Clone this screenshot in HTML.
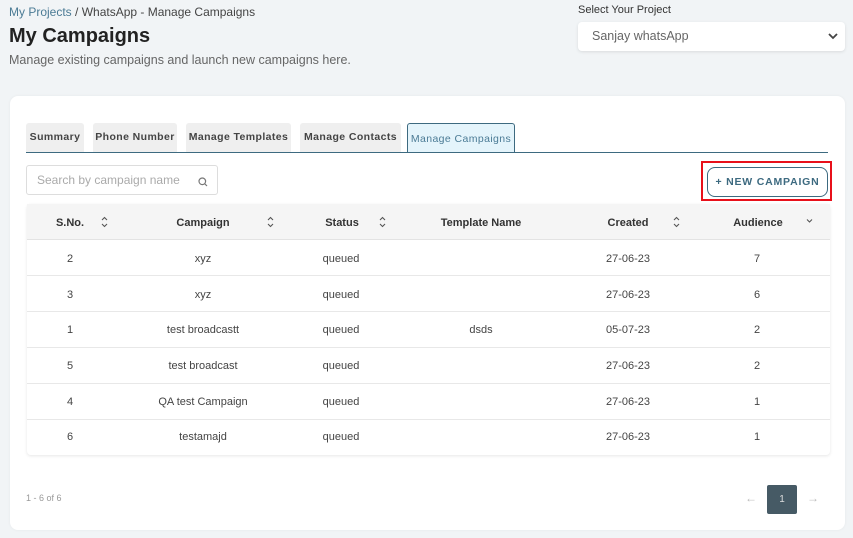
<!DOCTYPE html>
<html><head><style>
*{box-sizing:border-box;margin:0;padding:0}
body{width:853px;height:538px;background:#f1f4f6;font-family:"Liberation Sans",sans-serif;position:relative;overflow:hidden;color:#333}
.a{position:absolute}
.tab{position:absolute;top:123px;height:29px;background:#efefef;border-radius:3px 3px 0 0;font-size:10.5px;font-weight:bold;color:#444;text-align:center;line-height:29px;letter-spacing:.4px}
.th{position:absolute;top:205px;height:36px;line-height:36px;font-size:11px;font-weight:bold;color:#333;transform:translateX(-50%)}
.srt{position:absolute;top:216px}
.row{position:absolute;left:27px;width:803px;height:36px;border-bottom:1px solid #e8e8e8}
.c{position:absolute;font-size:11px;color:#444;line-height:36px;transform:translateX(-50%);white-space:nowrap}
</style></head><body>
<div class="a" style="left:9px;top:5px;font-size:12px;color:#444"><span style="color:#4b7b95">My Projects</span> / WhatsApp - Manage Campaigns</div>
<div class="a" style="left:9px;top:25px;font-size:20px;font-weight:bold;color:#222">My Campaigns</div>
<div class="a" style="left:9px;top:53px;font-size:12.5px;color:#666">Manage existing campaigns and launch new campaigns here.</div>
<div class="a" style="left:578px;top:4px;font-size:11px;color:#333">Select Your Project</div>
<div class="a" style="left:578px;top:22px;width:267px;height:29px;background:#fff;border-radius:4px;box-shadow:0 1px 3px rgba(0,0,0,.1);font-size:12.5px;color:#666;line-height:29px;padding-left:14px">Sanjay whatsApp
<svg class="a" style="right:6px;top:10px" width="12" height="8" viewBox="0 0 12 8"><path d="M2 2l4 4 4-4" stroke="#444" stroke-width="1.8" fill="none"/></svg></div>
<div class="a" style="left:10px;top:96px;width:835px;height:434px;background:#fff;border-radius:8px;box-shadow:0 0 3px rgba(0,0,0,.05)"></div>
<div class="tab" style="left:26px;width:58px">Summary</div>
<div class="tab" style="left:93px;width:84px">Phone Number</div>
<div class="tab" style="left:186px;width:105px">Manage Templates</div>
<div class="tab" style="left:300px;width:101px">Manage Contacts</div>
<div class="tab" style="left:407px;width:108px;background:#e4f4fb;border:1px solid #3d6a80;border-bottom:none;color:#4b7b95;font-weight:normal;line-height:30px">Manage Campaigns</div>
<div class="a" style="left:26px;top:152px;width:802px;height:1px;background:#3d6a80"></div>
<div class="a" style="left:26px;top:165px;width:192px;height:30px;border:1px solid #ddd;border-radius:3px;font-size:12px;color:#aaa;line-height:28px;padding-left:10px">Search by campaign name
<svg class="a" style="left:171px;top:11px" width="10" height="10" viewBox="0 0 10 10"><circle cx="4.3" cy="4.3" r="3.3" stroke="#777" stroke-width="1.2" fill="none"/><path d="M6.8 6.8L9 9" stroke="#777" stroke-width="1.2"/></svg></div>
<div class="a" style="left:701px;top:161px;width:131px;height:40px;border:2px solid #e8101a"></div>
<div class="a" style="left:707px;top:167px;width:121px;height:30px;border:1px solid #3d6a80;border-radius:8px;font-size:10.5px;font-weight:bold;color:#3d6a80;text-align:center;line-height:28px;letter-spacing:.8px">+ NEW CAMPAIGN</div>
<div class="a" style="left:27px;top:204px;width:803px;height:251px;border-radius:4px;box-shadow:0 1px 3px rgba(0,0,0,.1)"></div>
<div class="a" style="left:27px;top:204px;width:803px;height:36px;background:#f5f5f5;border-bottom:1px solid #e3e3e3"></div>
<div class="th" style="left:70px">S.No.</div><div class="th" style="left:203px">Campaign</div><div class="th" style="left:342px">Status</div><div class="th" style="left:481px">Template Name</div><div class="th" style="left:628px">Created</div><div class="th" style="left:758px">Audience</div>
<svg class="srt" style="left:101px" width="7" height="12" viewBox="0 0 7 12"><path d="M1 4l2.5-2.5L6 4M1 8l2.5 2.5L6 8" stroke="#555" stroke-width="1.1" fill="none"/></svg>
<svg class="srt" style="left:267px" width="7" height="12" viewBox="0 0 7 12"><path d="M1 4l2.5-2.5L6 4M1 8l2.5 2.5L6 8" stroke="#555" stroke-width="1.1" fill="none"/></svg>
<svg class="srt" style="left:379px" width="7" height="12" viewBox="0 0 7 12"><path d="M1 4l2.5-2.5L6 4M1 8l2.5 2.5L6 8" stroke="#555" stroke-width="1.1" fill="none"/></svg>
<svg class="srt" style="left:673px" width="7" height="12" viewBox="0 0 7 12"><path d="M1 4l2.5-2.5L6 4M1 8l2.5 2.5L6 8" stroke="#555" stroke-width="1.1" fill="none"/></svg>
<svg class="srt" style="left:806px;top:218px" width="7" height="6" viewBox="0 0 7 6"><path d="M1 1.5l2.5 2.5L6 1.5" stroke="#555" stroke-width="1.1" fill="none"/></svg>
<div class="row" style="top:240px"></div><div class="row" style="top:276px"></div><div class="row" style="top:312px"></div><div class="row" style="top:348px"></div><div class="row" style="top:384px"></div><div class="row" style="top:419px;border:none"></div>
<div class="c" style="left:70px;top:241px">2</div><div class="c" style="left:203px;top:241px">xyz</div><div class="c" style="left:341px;top:241px">queued</div><div class="c" style="left:628px;top:241px">27-06-23</div><div class="c" style="left:757px;top:241px">7</div>
<div class="c" style="left:70px;top:277px">3</div><div class="c" style="left:203px;top:277px">xyz</div><div class="c" style="left:341px;top:277px">queued</div><div class="c" style="left:628px;top:277px">27-06-23</div><div class="c" style="left:757px;top:277px">6</div>
<div class="c" style="left:70px;top:312px">1</div><div class="c" style="left:203px;top:312px">test broadcastt</div><div class="c" style="left:341px;top:312px">queued</div><div class="c" style="left:481px;top:312px">dsds</div><div class="c" style="left:628px;top:312px">05-07-23</div><div class="c" style="left:757px;top:312px">2</div>
<div class="c" style="left:70px;top:348px">5</div><div class="c" style="left:203px;top:348px">test broadcast</div><div class="c" style="left:341px;top:348px">queued</div><div class="c" style="left:628px;top:348px">27-06-23</div><div class="c" style="left:757px;top:348px">2</div>
<div class="c" style="left:70px;top:384px">4</div><div class="c" style="left:203px;top:384px">QA test Campaign</div><div class="c" style="left:341px;top:384px">queued</div><div class="c" style="left:628px;top:384px">27-06-23</div><div class="c" style="left:757px;top:384px">1</div>
<div class="c" style="left:70px;top:419px">6</div><div class="c" style="left:203px;top:419px">testamajd</div><div class="c" style="left:341px;top:419px">queued</div><div class="c" style="left:628px;top:419px">27-06-23</div><div class="c" style="left:757px;top:419px">1</div>
<div class="a" style="left:26px;top:493px;font-size:9px;color:#999">1 - 6 of 6</div>
<div class="a" style="left:745px;top:491px;font-size:12px;color:#bbb">←</div>
<div class="a" style="left:767px;top:485px;width:30px;height:29px;background:#465a65;border-radius:2px;color:#ddd;font-size:10px;text-align:center;line-height:29px">1</div>
<div class="a" style="left:807px;top:491px;font-size:12px;color:#bbb">→</div>
</body></html>
